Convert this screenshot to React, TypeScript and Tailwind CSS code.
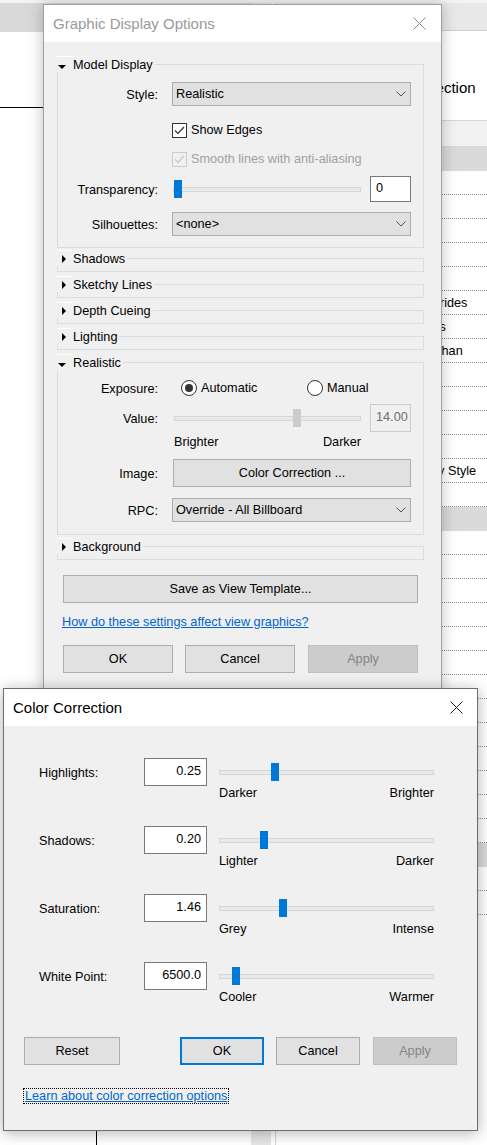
import React from 'react'

type Kids = { children?: React.ReactNode; className?: string }

const DownTri = () => (
  <span className="block h-0 w-0 translate-y-[2px] border-x-[4px] border-t-[4px] border-x-transparent border-t-black" />
)
const RightTri = () => (
  <span className="block h-0 w-0 border-y-[4px] border-l-[4px] border-y-transparent border-l-black" />
)

function CloseX({ color }: { color: string }) {
  return (
    <svg width="13" height="13" viewBox="0 0 13 13" aria-hidden="true">
      <path d="M0.5 0.5 L12.5 12.5 M12.5 0.5 L0.5 12.5" stroke={color} strokeWidth="1" fill="none" />
    </svg>
  )
}

function Chevron() {
  return (
    <svg width="10" height="6" viewBox="0 0 10 6" aria-hidden="true">
      <path d="M0.5 0.5 L5 5 L9.5 0.5" stroke="#555" strokeWidth="1" fill="none" />
    </svg>
  )
}

// fieldset-like box, header sits on the top border
function Group({ label, open, className, children }: Kids & { label: string; open?: boolean }) {
  return (
    <div className={`border border-[#dcdcdc] ${className ?? ''}`}>
      <div className="-ml-px -mt-[9px] flex h-[16px] w-fit items-center bg-[#f0f0f0] pr-[2px]">
        <span className={`flex h-full w-[16px] items-center border-t border-white ${open ? 'pl-[1px]' : 'pl-[5px]'}`}>
          {open ? <DownTri /> : <RightTri />}
        </span>
        <span className="translate-y-[1px]">{label}</span>
      </div>
      {open ? children : <div className="h-[5px]" />}
    </div>
  )
}

const Label = ({ children }: Kids) => (
  <div className="w-[100px] shrink-0 translate-y-[1px] text-right">{children}</div>
)

function Select({ children, className }: Kids) {
  return (
    <div
      className={`flex h-[24px] items-center justify-between border border-[#adadad] bg-[#e1e1e1] pl-[3px] pr-[4px] ${className ?? ''}`}
    >
      <span>{children}</span>
      <Chevron />
    </div>
  )
}

function Check({ disabled }: { disabled?: boolean }) {
  return (
    <span
      className={`flex h-[15px] w-[15px] shrink-0 items-center justify-center border ${
        disabled ? 'border-[#cccccc]' : 'border-[#333333] bg-white'
      }`}
    >
      <svg width="11" height="9" viewBox="0 0 11 9" aria-hidden="true">
        <path d="M1 4.5 L4 7.5 L10 1" fill="none" stroke={disabled ? '#c6c6c6' : '#333'} strokeWidth="1.2" />
      </svg>
    </span>
  )
}

function Radio({ checked }: { checked?: boolean }) {
  return (
    <span className="flex h-[16px] w-[16px] shrink-0 items-center justify-center rounded-full border border-[#333333] bg-white">
      {checked && <span className="h-[8px] w-[8px] rounded-full bg-[#333333]" />}
    </span>
  )
}

function Slider({ pos, className, disabled }: { pos: number; className?: string; disabled?: boolean }) {
  return (
    <div className={`relative h-[18px] ${className ?? ''}`}>
      <div className="absolute inset-x-0 top-[6.5px] h-[5px] border border-[#d6d6d6] bg-[#e7eaea]" />
      <div
        className={`absolute top-0 h-[18px] w-[8px] ${disabled ? 'bg-[#cccccc]' : 'bg-[#0078d7]'}`}
        style={{ left: pos }}
      />
    </div>
  )
}

function Btn({ children, className, disabled, focused }: Kids & { disabled?: boolean; focused?: boolean }) {
  const look = disabled
    ? 'border border-[#bfbfbf] bg-[#cccccc] text-[#858585]'
    : focused
      ? 'border-2 border-[#0078d7] bg-[#e1e1e1]'
      : 'border border-[#adadad] bg-[#e1e1e1]'
  return <div className={`flex h-[28px] shrink-0 items-center justify-center ${look} ${className ?? ''}`}>{children}</div>
}

function CcRow({ label, value, pos, left, right }: { label: string; value: string; pos: number; left: string; right: string }) {
  return (
    <div className="flex">
      <div className="flex h-[28px] w-[105px] shrink-0 translate-y-[1px] items-center">{label}</div>
      <div className="flex h-[28px] w-[63px] shrink-0 items-center justify-end border border-[#7a7a7a] bg-white pb-[3px] pr-[5px]">
        {value}
      </div>
      <div className="ml-[12px] w-[215px]">
        <div className="flex h-[28px] items-center">
          <Slider pos={pos} className="w-[215px]" />
        </div>
        <div className="-mt-[2px] flex h-[16px] translate-y-[1px] items-center justify-between">
          <span>{left}</span>
          <span>{right}</span>
        </div>
      </div>
    </div>
  )
}

// only the labels that show past the dialog edge carry text
const graphicsRows = [
  '',
  '',
  '',
  '',
  '',
  'Visibility/Graphics Overrides',
  'Graphic Display Options',
  'Hide at scales coarser than',
  '',
  '',
  '',
  '',
  'Default Analysis Display Style',
  ''
]
const extentRows = Array.from({ length: 13 }, () => '')
const phaseRows = ['', '']

function PropRow({ text }: { text: string }) {
  return (
    <div className="flex h-[24px] items-center whitespace-nowrap border-b border-dotted border-[#8f8f8f] pl-[33px]">{text}</div>
  )
}

const Band = () => <div className="h-[24px] bg-[#dadada]" />

export default function App() {
  return (
    <div className="relative h-[1145px] w-[487px] overflow-hidden bg-white font-['Liberation_Sans',Arial,sans-serif] text-[12.7px] leading-[16px] text-black">
      {/* ── Desktop behind the dialogs ─────────────────────────────────── */}
      <div className="h-[3px] bg-[#f3f3f3]" />
      <div className="flex h-[1142px]">
        {/* drawing area */}
        <div className="relative w-[251px] shrink-0">
          <div className="h-[29px] bg-[#d9d9d9]" />
          <div className="absolute left-0 top-[104px] h-px w-[96px] bg-black" />
          <div className="absolute bottom-0 left-[96px] top-[104px] w-px bg-black" />
        </div>
        {/* scrollbar */}
        <div className="w-[20px] shrink-0 bg-[#e6e6e6]" />
        <div className="w-[4px] shrink-0" />
        {/* properties palette */}
        <div className="min-w-0 flex-1 overflow-hidden border-l border-[#d4d4d4]">
          <div className="h-[28px] border-b border-[#d0d0d0] bg-[#e8e8e8]" />
          <div className="h-[89px] whitespace-nowrap pl-[92px] pt-[48px] text-[15px] leading-[17px]">Building Section</div>
          <div className="h-[27px] border-y border-[#d6d6d6] bg-[#f2f2f2]" />
          <Band />
          {graphicsRows.map((r, i) => (
            <PropRow key={`g${i}`} text={r} />
          ))}
          <Band />
          {extentRows.map((r, i) => (
            <PropRow key={`e${i}`} text={r} />
          ))}
          <Band />
          {phaseRows.map((r, i) => (
            <PropRow key={`p${i}`} text={r} />
          ))}
        </div>
      </div>

      {/* ── Graphic Display Options (inactive) ─────────────────────────── */}
      <div className="absolute left-[43px] top-[4px] h-[692px] w-[399px] border border-[#a0a0a0] bg-[#f0f0f0] shadow-[0_0_14px_rgba(0,0,0,0.25)]">
        <div className="flex h-[37px] items-center justify-between bg-white pl-[9px] pr-[15px] text-[15px] text-[#9a9a9a]">
          <span>Graphic Display Options</span>
          <CloseX color="#8c8c8c" />
        </div>

        <div className="pl-[13px] pr-[17px]">
          <Group label="Model Display" open className="mt-[22px]">
            <div className="pb-[11px]">
              <div className="mt-[10px] flex h-[24px] items-center">
                <Label>Style:</Label>
                <Select className="ml-[14px] w-[239px]">Realistic</Select>
              </div>
              <div className="mt-[12px] flex h-[24px] items-center pl-[114px]">
                <Check />
                <span className="ml-[4px]">Show Edges</span>
              </div>
              <div className="mt-[5px] flex h-[24px] items-center pl-[114px] text-[#a0a0a0]">
                <Check disabled />
                <span className="ml-[4px]">Smooth lines with anti-aliasing</span>
              </div>
              <div className="mt-[5px] flex h-[26px] items-center">
                <Label>Transparency:</Label>
                <Slider pos={1} className="ml-[15px] w-[188px]" />
                <div className="ml-[9px] flex h-[26px] w-[41px] items-center border border-[#7a7a7a] bg-white pb-[2px] pl-[5px]">
                  0
                </div>
              </div>
              <div className="mt-[10px] flex h-[24px] items-center">
                <Label>Silhouettes:</Label>
                <Select className="ml-[14px] w-[239px]">&lt;none&gt;</Select>
              </div>
            </div>
          </Group>

          <Group label="Shadows" className="mt-[10px]" />
          <Group label="Sketchy Lines" className="mt-[12px]" />
          <Group label="Depth Cueing" className="mt-[12px]" />
          <Group label="Lighting" className="mt-[12px]" />

          <Group label="Realistic" open className="mt-[12px]">
            <div className="pb-[12px]">
              <div className="mt-[8px] flex h-[20px] items-center">
                <Label>Exposure:</Label>
                <div className="ml-[23px] flex w-[126px] items-center">
                  <Radio checked />
                  <span className="ml-[4px]">Automatic</span>
                </div>
                <Radio />
                <span className="ml-[4px]">Manual</span>
              </div>
              <div className="mt-[6px] flex h-[28px] items-center">
                <Label>Value:</Label>
                <Slider pos={119} disabled className="ml-[16px] w-[187px]" />
                <div className="ml-[9px] flex h-[28px] w-[41px] items-center border border-[#cccccc] bg-[#f0f0f0] pb-[3px] pl-[5px] text-[#6d6d6d]">
                  14.00
                </div>
              </div>
              <div className="ml-[116px] mt-[2px] flex h-[16px] w-[187px] items-center justify-between">
                <span>Brighter</span>
                <span>Darker</span>
              </div>
              <div className="mt-[10px] flex h-[25px] items-center">
                <Label>Image:</Label>
                <Btn className="ml-[15px] h-[25px] w-[238px]">Color Correction ...</Btn>
              </div>
              <div className="mt-[13px] flex h-[24px] items-center">
                <Label>RPC:</Label>
                <Select className="ml-[14px] w-[239px]">Override - All Billboard</Select>
              </div>
            </div>
          </Group>

          <Group label="Background" className="mt-[11px]" />

          <Btn className="ml-[6px] mt-[15px] w-[355px]">Save as View Template...</Btn>

          <div className="ml-[5px] mt-[11px] h-[16px] text-[#0066cc] underline">How do these settings affect view graphics?</div>

          <div className="ml-[6px] mt-[15px] flex">
            <Btn className="w-[110px]">OK</Btn>
            <Btn className="ml-[12px] w-[110px]">Cancel</Btn>
            <Btn disabled className="ml-[13px] w-[110px]">
              Apply
            </Btn>
          </div>
        </div>
      </div>

      {/* ── Color Correction (active) ──────────────────────────────────── */}
      <div className="absolute left-[3px] top-[688px] h-[443px] w-[475px] border border-[#6e6e6e] bg-[#f0f0f0] shadow-[0_2px_14px_rgba(0,0,0,0.3)]">
        <div className="flex h-[37px] items-center justify-between bg-white pl-[9px] pr-[14px] text-[15px]">
          <span>Color Correction</span>
          <CloseX color="#1a1a1a" />
        </div>

        <div className="flex flex-col gap-[26px] pl-[35px] pt-[32px]">
          <CcRow label="Highlights:" value="0.25" pos={52} left="Darker" right="Brighter" />
          <CcRow label="Shadows:" value="0.20" pos={41} left="Lighter" right="Darker" />
          <CcRow label="Saturation:" value="1.46" pos={60} left="Grey" right="Intense" />
          <CcRow label="White Point:" value="6500.0" pos={13} left="Cooler" right="Warmer" />
        </div>

        <div className="mt-[33px] flex pl-[20px]">
          <Btn className="w-[96px]">Reset</Btn>
          <Btn focused className="ml-[60px] w-[84px]">
            OK
          </Btn>
          <Btn className="ml-[12px] w-[84px]">Cancel</Btn>
          <Btn disabled className="ml-[13px] w-[84px]">
            Apply
          </Btn>
        </div>

        <div className="ml-[19px] mt-[23px] flex h-[16px] w-fit items-center border border-dotted border-black px-[1px] text-[#0066cc] underline">
          Learn about color correction options
        </div>
      </div>
    </div>
  )
}
